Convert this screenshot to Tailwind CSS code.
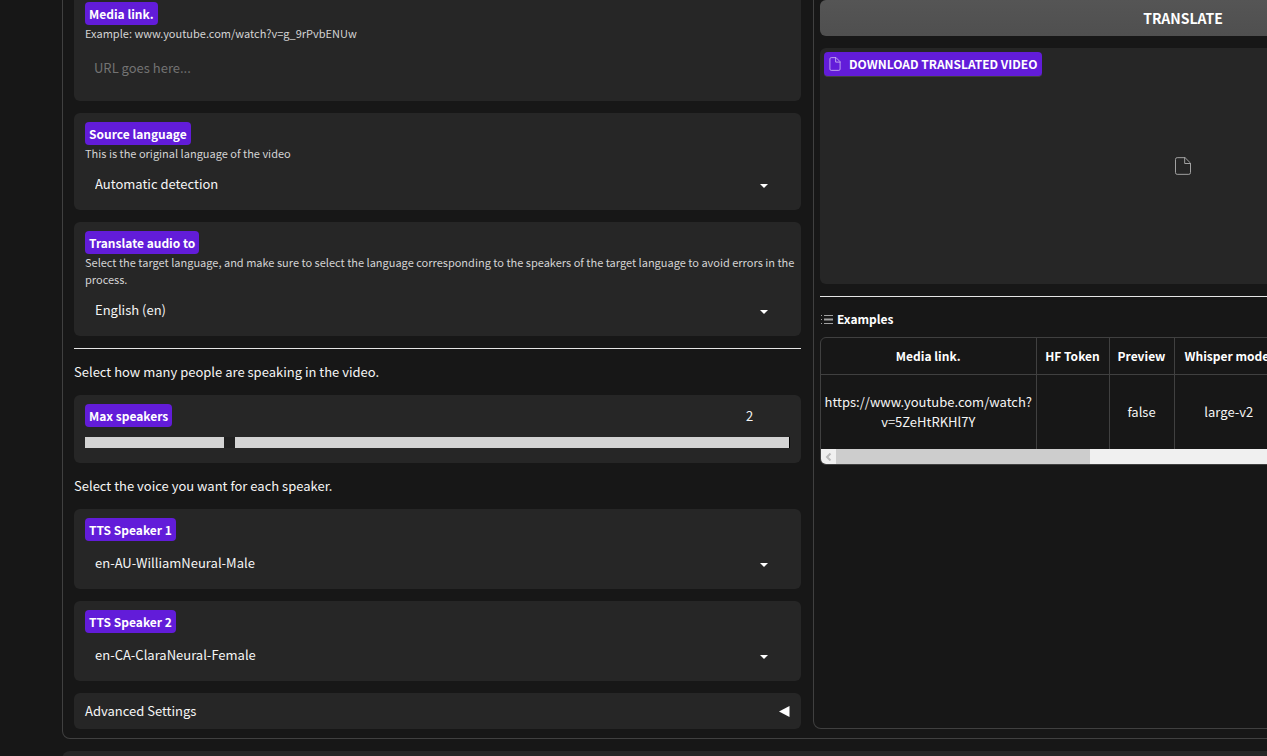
<!DOCTYPE html>
<html lang="en">

<head>
    <meta charset="UTF-8">
    <meta name="viewport" content="width=device-width, initial-scale=1.0">
    <title>Video Translation</title>
    <script src="https://cdn.jsdelivr.net/npm/@tailwindcss/browser@4"></script>
</head>

<body class="bg-[#171717] text-neutral-100 font-['Source_Sans_Pro','Noto_Sans_CJK_SC',sans-serif] text-[13px] leading-[20px] min-h-screen overflow-hidden">

    <main class="ml-[62px] min-w-[1503px]">
        <div class="grid grid-cols-[727fr_740fr] gap-3 px-[11px] pb-[9px] border border-t-0 border-neutral-700 rounded-b-lg">

            <!-- Settings -->
            <div class="flex flex-col gap-3">
                <div class="bg-neutral-800 rounded-b-md px-[11px] pt-[2px] pb-[9px]">
                    <label for="link" class="block w-fit bg-[#621cd9] text-white text-[12px] font-bold rounded px-1 leading-[23px]">Media link.</label>
                    <p class="-mr-2 text-[11px] leading-[17px] text-neutral-300">Example: www.youtube.com/watch?v=g_9rPvbENUw</p>
                    <input type="text" id="link" placeholder="URL goes here..."
                        class="block w-full h-[40px] mt-[5px] mb-[5px] px-[9px] placeholder:text-neutral-500 focus:outline-none">
                </div>

                <div class="bg-neutral-800 rounded-md px-[11px] py-[9px]">
                    <label for="source" class="block w-fit bg-[#621cd9] text-white text-[12px] font-bold rounded px-1 leading-[23px]">Source language</label>
                    <p class="-mr-2 text-[11px] leading-[17px] text-neutral-300">This is the original language of the video</p>
                    <div class="relative mt-[5px]">
                        <select id="source" class="block appearance-none w-full h-[34px] px-[10px] focus:outline-none">
                            <option>Automatic detection</option>
                        </select>
                        <svg class="absolute right-[17px] top-[10px] pointer-events-none" width="18" height="18" viewBox="0 0 18 18" fill="#fff"><path d="M5 7l4 4 4-4z" /></svg>
                    </div>
                </div>

                <div class="bg-neutral-800 rounded-md px-[11px] py-[9px]">
                    <label for="target" class="block w-fit bg-[#621cd9] text-white text-[12px] font-bold rounded px-1 leading-[23px]">Translate audio to</label>
                    <p class="-mr-2 text-[11px] leading-[17px] text-neutral-300">Select the target language, and make sure to select the language corresponding to the speakers of the target language to avoid errors in the process.</p>
                    <div class="relative mt-[5px]">
                        <select id="target" class="block appearance-none w-full h-[34px] px-[10px] focus:outline-none">
                            <option>English (en)</option>
                        </select>
                        <svg class="absolute right-[17px] top-[10px] pointer-events-none" width="18" height="18" viewBox="0 0 18 18" fill="#fff"><path d="M5 7l4 4 4-4z" /></svg>
                    </div>
                </div>

                <hr class="border-neutral-200">
                <p class="leading-[22px]">Select how many people are speaking in the video.</p>

                <div class="bg-neutral-800 rounded-md px-[11px] pt-[9px] pb-[15px]">
                    <div class="flex items-start justify-between">
                        <label for="speakers" class="bg-[#621cd9] text-white text-[12px] font-bold rounded px-1 leading-[23px]">Max speakers</label>
                        <input type="number" aria-label="Number of speakers" value="2" class="w-[66px] h-[23px] px-2 text-center focus:outline-none">
                    </div>
                    <input type="range" id="speakers" min="1" max="6" value="2"
                        class="block appearance-none w-full h-[11px] mt-[10px] bg-[#d3d3d3] border-r border-black [&::-webkit-slider-thumb]:appearance-none [&::-webkit-slider-thumb]:w-[11px] [&::-webkit-slider-thumb]:h-[11px] [&::-webkit-slider-thumb]:bg-[#202020]">
                </div>

                <p class="leading-[22px]">Select the voice you want for each speaker.</p>

                <div class="bg-neutral-800 rounded-md px-[11px] py-[9px]">
                    <label for="tts1" class="block w-fit bg-[#621cd9] text-white text-[12px] font-bold rounded px-1 leading-[23px]">TTS Speaker 1</label>
                    <div class="relative mt-[5px]">
                        <select id="tts1" class="block appearance-none w-full h-[34px] px-[10px] focus:outline-none">
                            <option>en-AU-WilliamNeural-Male</option>
                        </select>
                        <svg class="absolute right-[17px] top-[10px] pointer-events-none" width="18" height="18" viewBox="0 0 18 18" fill="#fff"><path d="M5 7l4 4 4-4z" /></svg>
                    </div>
                </div>

                <div class="bg-neutral-800 rounded-md px-[11px] py-[9px]">
                    <label for="tts2" class="block w-fit bg-[#621cd9] text-white text-[12px] font-bold rounded px-1 leading-[23px]">TTS Speaker 2</label>
                    <div class="relative mt-[5px]">
                        <select id="tts2" class="block appearance-none w-full h-[34px] px-[10px] focus:outline-none">
                            <option>en-CA-ClaraNeural-Female</option>
                        </select>
                        <svg class="absolute right-[17px] top-[10px] pointer-events-none" width="18" height="18" viewBox="0 0 18 18" fill="#fff"><path d="M5 7l4 4 4-4z" /></svg>
                    </div>
                </div>

                <button type="button" class="flex justify-between items-center bg-neutral-800 rounded-md px-[11px] py-2">
                    <span>Advanced Settings</span>
                    <svg width="11" height="11" viewBox="0 0 11 11" fill="#fff"><path d="M0 5.5L10.5 0v11z" /></svg>
                </button>
            </div>

            <!-- Result -->
            <div class="flex flex-col gap-3 min-w-0 px-[6px] border border-t-0 border-neutral-700 rounded-b-lg">
                <button type="button" class="w-full h-[36px] rounded-md bg-linear-to-b from-[#555] to-[#4f4f4f] text-white text-[14px] font-bold">TRANSLATE</button>

                <div class="relative flex items-center justify-center h-[236px] bg-neutral-800 rounded-md">
                    <div class="absolute left-1 top-1 flex items-center gap-2 h-[25px] px-[5px] bg-[#621cd9] text-white text-[12px] font-bold rounded border-b border-neutral-700">
                        <svg class="opacity-60" width="12" height="14" viewBox="3 1 18 22" fill="none" stroke="currentColor" stroke-width="1.5" stroke-linecap="round" stroke-linejoin="round"><path d="M13 2H6a2 2 0 0 0-2 2v16a2 2 0 0 0 2 2h12a2 2 0 0 0 2-2V9z" /><path d="M13 2v7h7" /></svg>
                        DOWNLOAD TRANSLATED VIDEO
                    </div>
                    <svg class="text-neutral-400" width="20" height="20" viewBox="0 0 24 24" fill="none" stroke="currentColor" stroke-width="1.2" stroke-linecap="round" stroke-linejoin="round"><path d="M14 2H5a2 2 0 0 0-2 2v16a2 2 0 0 0 2 2h14a2 2 0 0 0 2-2V9z" /><path d="M14 2v7h7" /></svg>
                </div>

                <hr class="border-neutral-200">

                <div>
                    <h2 class="flex items-center gap-1 h-[20px] mb-2 text-white text-[12px] font-bold">
                        <svg class="text-neutral-400" width="13" height="12" viewBox="0 0 13 12" fill="none" stroke="currentColor"><path d="M1 2.5h1M4 2.5h9M1 6.5h1M1 10.5h1M4 10.5h9" stroke-width="1" /><path d="M4 6.5h9" stroke-width="2" /></svg>
                        Examples
                    </h2>
                    <div class="border border-neutral-700 rounded-md overflow-hidden">
                        <table class="w-max text-center">
                            <thead>
                                <tr class="h-[36px] border-b border-neutral-700 text-white text-[12px]">
                                    <th class="w-[215px] border-r border-neutral-700">Media link.</th>
                                    <th class="w-[73px] border-r border-neutral-700">HF Token</th>
                                    <th class="w-[65px] border-r border-neutral-700">Preview</th>
                                    <th class="w-[109px] whitespace-nowrap">Whisper model</th>
                                </tr>
                            </thead>
                            <tbody>
                                <tr class="h-[75px]">
                                    <td class="border-r border-neutral-700">https://www.youtube.com/watch?<br>v=5ZeHtRKHl7Y</td>
                                    <td class="border-r border-neutral-700"></td>
                                    <td class="border-r border-neutral-700">false</td>
                                    <td>large-v2</td>
                                </tr>
                            </tbody>
                        </table>
                        <!-- Scrollbar -->
                        <div class="flex h-[15px] bg-[#f0f0f0]">
                            <div class="flex items-center justify-center w-[15px]">
                                <svg width="7" height="8" viewBox="0 0 7 8" fill="none" stroke="#bbb" stroke-width="2"><path d="M5.5 .5L2 4l3.5 3.5" /></svg>
                            </div>
                            <div class="w-[254px] bg-[#cdcdcd]"></div>
                        </div>
                    </div>
                </div>
            </div>
        </div>

        <div class="mt-3 h-10 bg-neutral-800 rounded-t-lg"></div>
    </main>

</body>

</html>
